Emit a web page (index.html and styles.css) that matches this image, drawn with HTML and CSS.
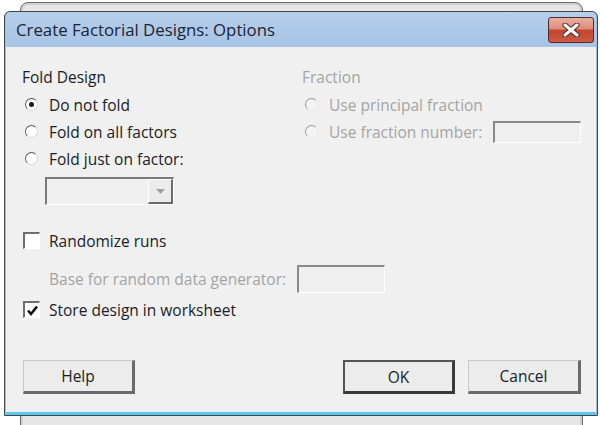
FILE: index.html
```html
<!DOCTYPE html>
<html>
<head>
<meta charset="utf-8">
<link rel="stylesheet" href="styles.css">
</head>
<body>
<div class="desktop">
  <div class="backwin"></div>
  <div class="dialog">
    <div class="titlebar">
      <span class="title">Create Factorial Designs: Options</span>
      <span class="close">
        <svg width="20" height="14" viewBox="0 0 20 14">
          <path d="M4 2 L16 12 M16 2 L4 12" stroke="#4a2a28" stroke-width="5" stroke-linecap="round"/>
          <path d="M4 2 L16 12 M16 2 L4 12" stroke="#ffffff" stroke-width="3" stroke-linecap="round"/>
        </svg>
      </span>
    </div>
    <div class="body">
      <div class="top">
        <div class="col left">
          <div class="group-label">Fold Design</div>
          <div class="row radio-row"><span class="radio checked"></span>Do not fold</div>
          <div class="row radio-row"><span class="radio"></span>Fold on all factors</div>
          <div class="row radio-row"><span class="radio"></span>Fold just on factor:</div>
          <div class="combo">
            <span class="combo-field"></span>
            <span class="combo-btn">
              <svg width="9" height="5" viewBox="0 0 9 5"><path d="M0 0 H9 L4.5 5 Z" fill="#a0a0a0"/></svg>
            </span>
          </div>
        </div>
        <div class="col right disabled">
          <div class="group-label">Fraction</div>
          <div class="row radio-row"><span class="radio"></span>Use principal fraction</div>
          <div class="row radio-row"><span class="radio"></span>Use fraction number:<span class="field small"></span></div>
        </div>
      </div>
      <div class="row check-row randomize"><span class="checkbox"></span>Randomize runs</div>
      <div class="row base disabled">Base for random data generator:<span class="field"></span></div>
      <div class="row check-row store">
        <span class="checkbox">
          <svg width="13" height="13" viewBox="0 0 13 13"><path d="M2 6.5 L5 10 L11 2.5" stroke="#111" stroke-width="2.6" fill="none"/></svg>
        </span>Store design in worksheet
      </div>
      <div class="buttons">
        <span class="btn help">Help</span>
        <span class="spacer"></span>
        <span class="btn default">OK</span>
        <span class="btn cancel">Cancel</span>
      </div>
    </div>
  </div>
</div>
</body>
</html>
```
FILE: styles.css
```css
html, body {
  margin: 0;
  padding: 0;
  background: #ffffff;
}
.desktop {
  position: relative;
  width: 600px;
  height: 425px;
  overflow: hidden;
  font-family: "Open Sans", "Noto Sans", sans-serif;
  font-size: 15.5px;
  color: #1a1c28;
}
.backwin {
  position: absolute;
  left: 20px;
  top: 2px;
  width: 561px;
  height: 440px;
  border: 1px solid #6a6a6a;
  border-radius: 8px 8px 0 0;
  background: #e6e6e6;
  box-shadow: inset 0 0 0 2px #d0d0d0;
}
.dialog {
  position: absolute;
  left: 4px;
  top: 11px;
  width: 590px;
  height: 403px;
  border: 1px solid #3e4650;
  border-radius: 6px 6px 0 0;
  background: #9cc0e6;
  padding: 0 1px;
  display: flex;
  flex-direction: column;
}
.titlebar {
  height: 35px;
  flex: none;
  display: flex;
  align-items: center;
  padding: 0 2px 0 10px;
  background: linear-gradient(#b6cfeb, #a7c3e4);
  border-radius: 5px 5px 0 0;
}
.title {
  font-size: 16.8px;
  color: #1b2433;
  flex: 1;
}
.close {
  width: 44px;
  height: 24px;
  border: 1px solid #4f2c2a;
  border-radius: 3px;
  background: linear-gradient(#eab0a4 0%, #dc8a78 45%, #c3452f 52%, #cf5a42 100%);
  display: flex;
  align-items: center;
  justify-content: center;
  margin-top: 1px;
}
.body {
  flex: 1;
  background: #f0f0f0;
  border-bottom: 3px solid #5cc6ef;
  padding: 17px 15px 0 16px;
  display: flex;
  flex-direction: column;
}
.top {
  display: flex;
}
.col.left {
  width: 280px;
  display: flex;
  flex-direction: column;
}
.col.right {
  flex: 1;
  display: flex;
  flex-direction: column;
}
.group-label {
  height: 27px;
  line-height: 27px;
}
.row {
  display: flex;
  align-items: center;
  height: 27px;
  white-space: nowrap;
}
.radio-row {
  padding-left: 3px;
}
.radio {
  width: 11px;
  height: 11px;
  border-radius: 50%;
  border: 1px solid #5a5a5a;
  border-right-color: #d8d8d8;
  border-bottom-color: #d8d8d8;
  background: #ffffff;
  margin-right: 11px;
  position: relative;
  flex: none;
}
.radio.checked::after {
  content: "";
  position: absolute;
  left: 3px;
  top: 3px;
  width: 5px;
  height: 5px;
  border-radius: 50%;
  background: #1a1a1a;
}
.disabled {
  color: #a4a4a4;
}
.disabled .radio {
  border-color: #9a9a9a #e8e8e8 #e8e8e8 #9a9a9a;
  background: #f4f4f4;
}
.combo {
  margin-top: 5px;
  margin-left: 23px;
  width: 126px;
  height: 25px;
  display: flex;
  border-top: 2px solid #7a7a7a;
  border-left: 2px solid #7a7a7a;
  border-bottom: 1px solid #ffffff;
  border-right: 1px solid #ffffff;
  background: #f0f0f0;
}
.combo-field {
  flex: 1;
}
.combo-btn {
  width: 22px;
  display: flex;
  align-items: center;
  justify-content: center;
  border-left: 1px solid #ffffff;
  border-top: 1px solid #ffffff;
  border-right: 2px solid #6a6a6a;
  border-bottom: 2px solid #6a6a6a;
  background: #ececec;
}
.field {
  width: 85px;
  height: 25px;
  border-top: 2px solid #8a8a8a;
  border-left: 2px solid #8a8a8a;
  border-bottom: 1px solid #ffffff;
  border-right: 1px solid #ffffff;
  background: #efefef;
  margin-left: auto;
  flex: none;
}
.field.small {
  height: 19px;
  width: 85px;
  margin-left: auto;
}
.check-row .checkbox {
  width: 14px;
  height: 14px;
  border-top: 2px solid #6e6e6e;
  border-left: 2px solid #6e6e6e;
  border-bottom: 1px solid #ffffff;
  border-right: 1px solid #ffffff;
  background: #ffffff;
  margin-left: 1px;
  margin-right: 9px;
  display: flex;
  align-items: center;
  justify-content: center;
  flex: none;
}
.randomize {
  margin-top: 22px;
}
.base {
  height: 28px;
  margin-top: 11px;
  padding-left: 27px;
  width: 336px;
}
.store {
  margin-top: 3px;
}
.buttons {
  margin-top: 37px;
  display: flex;
  gap: 13px;
}
.spacer {
  flex: 1;
}
.btn {
  width: 108px;
  height: 30px;
  display: flex;
  align-items: center;
  justify-content: center;
  background: #ececec;
  border-top: 1px solid #c8c8c8;
  border-left: 1px solid #c8c8c8;
  border-right: 3px solid #6a6a6a;
  border-bottom: 3px solid #6a6a6a;
}
.btn.help {
  margin-left: 1px;
}
.btn.cancel {
  width: 109px;
}
.btn.default {
  border: 2px solid #555555;
  border-right-width: 3px;
  border-bottom-width: 3px;
  border-right-color: #3a3a3a;
  border-bottom-color: #3a3a3a;
  width: 107px;
  height: 29px;
}
```
